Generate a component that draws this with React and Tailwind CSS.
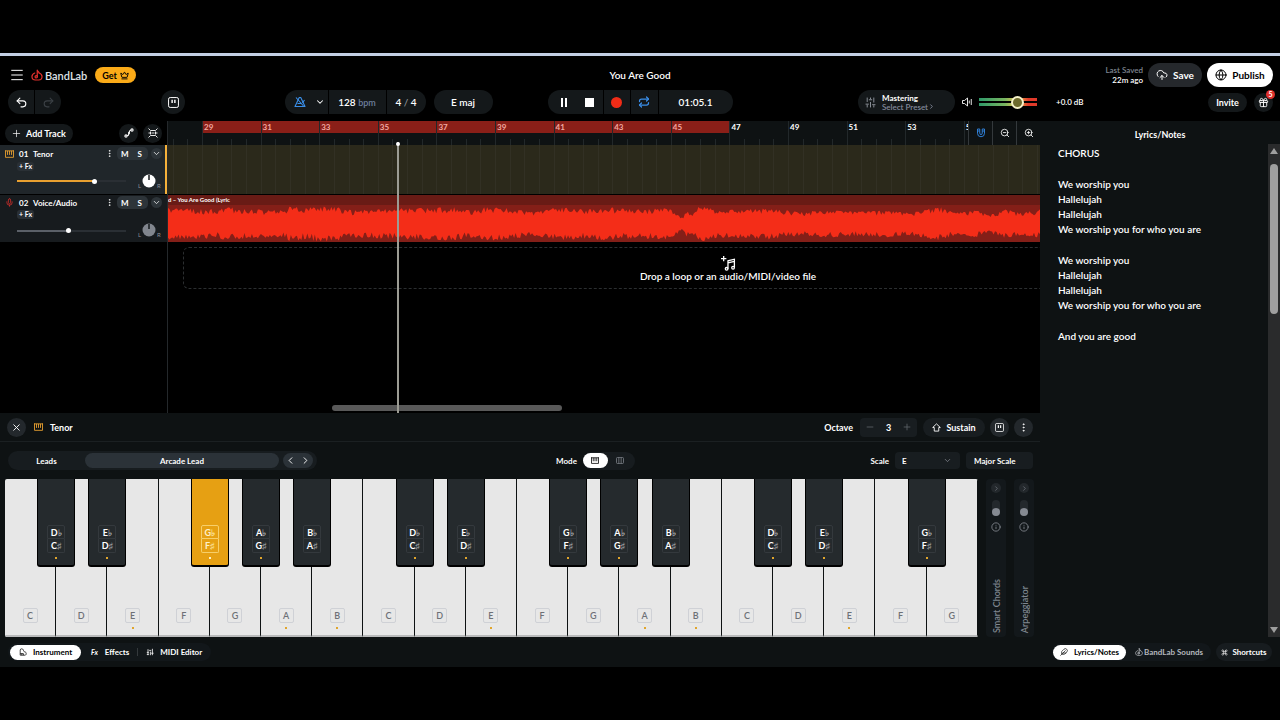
import {
  Menu,
  Undo2,
  Redo2,
  Crown,
  Plus,
  Minus,
  ChevronDown,
  ChevronLeft,
  ChevronRight,
  EllipsisVertical,
  Mic,
  X,
  Repeat,
  Gift,
  Globe,
  CloudUpload,
  ZoomIn,
  ZoomOut,
  Info,
  Feather,
  Command
} from 'lucide-react'
import clsx from 'clsx'

const FIRST_BAR = 29
const BAR_WIDTH = 29.3
const BAR_OFFSET = 34

const barX = (bar) => BAR_OFFSET + (bar - FIRST_BAR) * BAR_WIDTH

const BAR_LABELS = [29, 31, 33, 35, 37, 39, 41, 43, 45, 47, 49, 51, 53, 55]
const TICKS = Array.from({ length: 62 }, (_, i) => 28 + i / 2)

const TRACKS = [
  { id: '01', name: 'Tenor', kind: 'keys', volume: 72, active: true },
  { id: '02', name: 'Voice/Audio', kind: 'mic', volume: 47, active: false }
]

const OCTAVE = [
  { note: 'C', black: ['D', 'C'], blackDot: true },
  { note: 'D', black: ['E', 'D'], blackDot: true },
  { note: 'E', dot: true },
  { note: 'F', black: ['G', 'F'], blackDot: true },
  { note: 'G', black: ['A', 'G'], blackDot: true },
  { note: 'A', black: ['B', 'A'], dot: true },
  { note: 'B', dot: true }
]
const KEYS = Array.from({ length: 19 }, (_, i) => ({
  ...OCTAVE[i % 7],
  id: i,
  pressed: i === 3,
  last: i === 18
}))

const LYRICS = [
  ['CHORUS'],
  ['We worship you', 'Hallelujah', 'Hallelujah', 'We worship you for who you are'],
  ['We worship you', 'Hallelujah', 'Hallelujah', 'We worship you for who you are'],
  ['And you are good']
]

// [x, loudness] points that the waveform follows
const ENVELOPE = [
  [0, 14], [50, 13], [62, 15], [80, 13], [118, 12], [121, 16], [135, 14], [150, 16],
  [170, 15], [185, 12], [210, 13], [235, 14], [262, 14], [285, 15], [305, 12], [318, 15],
  [345, 14], [360, 11], [376, 12], [390, 15], [420, 13], [440, 15], [470, 13], [500, 14],
  [508, 11], [514, 5], [519, 12], [524, 8], [532, 16], [540, 15], [550, 12], [580, 13],
  [600, 14], [630, 11], [660, 12], [690, 11], [720, 12], [740, 10], [760, 13], [773, 15],
  [790, 10], [810, 12], [822, 8], [838, 13], [855, 10], [873, 13]
]

const loudnessAt = (x) => {
  const i = Math.max(1, ENVELOPE.findIndex(([px]) => px >= x))
  const [x0, y0] = ENVELOPE[i - 1]
  const [x1, y1] = ENVELOPE[i]
  return y0 + ((y1 - y0) * (x - x0)) / (x1 - x0)
}

const buildWave = () => {
  let seed = 11
  const rand = () => {
    seed = (seed * 16807) % 2147483647
    return seed / 2147483647
  }
  const top = []
  const bottom = []
  for (let x = 0; x <= 873; x += 1.5) {
    const amp = loudnessAt(x)
    const up = amp * (1.14 - 0.42 * rand() ** 1.6)
    const down = amp * (1.12 - 0.48 * rand() ** 1.6)
    top.push(`${x},${(19 - up).toFixed(1)}`)
    bottom.unshift(`${x},${(19 + down).toFixed(1)}`)
  }
  return `M${top.join('L')}L${bottom.join('L')}Z`
}
const WAVE = buildWave()

const BandLabMark = ({ className }) => (
  <svg viewBox="0 0 24 24" fill="none" stroke="currentColor" strokeWidth="2.4" strokeLinecap="round" className={className}>
    <path d="M7.500 8C3 10 1.500 13 2 16.500 2.500 20 5 22 8.500 22h7c3.500 0 6-2 6.500-5.500.5-3.500-1-6.500-5.500-8.500" />
    <path d="M12.500 2v13M12.500 2c0 3 3.500 3 3.500 6" />
    <circle cx="10.500" cy="15.500" r="2.400" />
  </svg>
)

const KeysIcon = ({ className }) => (
  <svg viewBox="0 0 20 18" fill="none" stroke="currentColor" strokeWidth="2" className={className}>
    <path d="M1 1v15.500h18V1" />
    <path d="M0 2h20M5.500 2v9M10 2v9M14.500 2v9" />
  </svg>
)

const PadIcon = ({ className }) => (
  <svg viewBox="0 0 20 20" fill="none" stroke="currentColor" strokeWidth="1.8" className={className}>
    <rect x="1" y="1" width="18" height="18" rx="3" />
    <path d="M7.500 5v6M12.500 5v6" strokeWidth="2.600" />
  </svg>
)

const GridIcon = ({ className }) => (
  <svg viewBox="0 0 20 18" fill="none" stroke="currentColor" strokeWidth="1.8" className={className}>
    <rect x="1" y="1" width="18" height="16" rx="3" />
    <path d="M7 1v16M13 1v16" />
  </svg>
)

const MetronomeIcon = ({ className }) => (
  <svg viewBox="0 0 24 24" fill="none" stroke="currentColor" strokeWidth="2.2" strokeLinejoin="round" className={className}>
    <path d="M10.500 3h3L22 21H2L10.500 3Z" />
    <path d="M4 3l15 17M7 15h7M17 14l4-6" />
  </svg>
)

const AutomationIcon = ({ className }) => (
  <svg viewBox="0 0 20 20" fill="none" stroke="currentColor" strokeWidth="2.2" className={className}>
    <circle cx="4" cy="16" r="2.200" />
    <circle cx="16" cy="4" r="2.200" />
    <path d="M6 15.500c5 0 3-3 4-5.500s0-5.500 4-5.500" />
    <path d="M8 10h4" strokeWidth="3" />
  </svg>
)

const FitIcon = ({ className }) => (
  <svg viewBox="0 0 20 20" fill="none" stroke="currentColor" strokeWidth="1.800" className={className}>
    <path d="M1 1l4 4h10l4-4M1 19l4-4h10l4 4M1 10h4M15 10h4M7 10h6M5 7v6M15 7v6" />
  </svg>
)

const MagnetIcon = ({ className }) => (
  <svg viewBox="0 0 20 20" fill="none" stroke="currentColor" strokeWidth="2" className={className}>
    <path d="M3 2h4.500v8.500a2.500 2.500 0 0 0 5 0V2H17v8.500a7 7 0 0 1-14 0V2ZM3 6h4.500M12.500 6H17" />
  </svg>
)

const MixerIcon = ({ className }) => (
  <svg viewBox="0 0 20 20" fill="none" stroke="currentColor" strokeWidth="1.8" className={className}>
    <path d="M4 1v8M4 14v5M1 13h6M10 1v3M10 9v10M7 5h6M16 1v9M16 15v4M13 14h6" />
  </svg>
)

const SpeakerIcon = ({ className }) => (
  <svg viewBox="0 0 20 20" fill="none" stroke="currentColor" strokeWidth="1.8" strokeLinejoin="round" className={className}>
    <path d="M1 7h4l6-5v16l-6-5H1V7Z" />
    <path d="M14.500 7v6M18.500 4v12" />
  </svg>
)

const UpIcon = ({ className }) => (
  <svg viewBox="0 0 20 20" fill="none" stroke="currentColor" strokeWidth="2" strokeLinejoin="round" className={className}>
    <path d="M10 2 1.500 10H5v8h10v-8h3.500L10 2Z" />
  </svg>
)

const DropIcon = ({ className }) => (
  <svg viewBox="0 0 28 28" fill="none" stroke="currentColor" strokeWidth="2.4" className={className}>
    <path d="M5 0v10M0 5h10" />
    <path d="M13 24V9l12-3v15M13 13l12-3" />
    <circle cx="10.500" cy="24" r="2.500" />
    <circle cx="22.500" cy="22" r="2.500" />
  </svg>
)

const InstrumentIcon = ({ className }) => (
  <svg viewBox="0 0 20 20" fill="none" stroke="currentColor" strokeWidth="1.8" className={className}>
    <path d="M3 18V5c0-4 7-4 8 0 .6 3 1 4 3 4.500 3 .5 4 2 4 4.500 0 2-1 4-3 4H3ZM3 14h8M7 14v4M11 14v4" />
  </svg>
)

const MidiIcon = ({ className }) => (
  <svg viewBox="0 0 20 20" fill="none" stroke="currentColor" strokeWidth="2" className={className}>
    <path d="M2 11h5M2 16h5M8 6h5M5 3v15M11 9v9M16 2v16M13 13h6" />
  </svg>
)

const IconButton = ({ label, className, children }) => (
  <button aria-label={label} className={clsx('flex shrink-0 items-center justify-center', className)}>
    {children}
  </button>
)

const Header = () => (
  <header className="flex flex-col gap-[3px] pt-[7px] pb-[7px]">
    <div className="grid h-6 grid-cols-[1fr_auto_1fr] items-center">
      <div className="flex items-center pl-[9px]">
        <IconButton label="Menu">
          <Menu size={16} strokeWidth={1.5} />
        </IconButton>
        <a href="#home" className="ml-[6px] flex items-center gap-[2px]">
          <BandLabMark className="size-3 text-[#e0302c]" />
          <span className="text-[11px] font-semibold text-[#dfe2e6]">BandLab</span>
        </a>
        <button className="ml-2 flex h-4 items-center gap-[3px] rounded-full bg-[#fbab18] px-[7px] text-[9px] font-bold text-black">
          Get <Crown size={9} strokeWidth={2.5} />
        </button>
      </div>
      <h1 className="text-[10px] font-semibold">You Are Good</h1>
      <div className="flex items-center justify-end pr-[7px]">
        <div className="mr-[5px] flex flex-col gap-[2px] text-right text-[8px] font-semibold">
          <span className="text-[#7f8691]">Last Saved</span>
          <span>22m ago</span>
        </div>
        <button className="mr-[5px] flex h-6 w-[54px] items-center justify-center gap-[5px] rounded-full bg-[#25282c] text-[10px] font-bold">
          <CloudUpload size={12} /> Save
        </button>
        <button className="flex h-6 w-[66px] items-center justify-center gap-[5px] rounded-full bg-white text-[10px] font-bold text-black">
          <Globe size={12} /> Publish
        </button>
      </div>
    </div>

    <div className="grid h-6 grid-cols-[1fr_auto_1fr] items-center text-[10px] font-semibold">
      <div className="flex items-center pr-[55px] pl-2">
        <div className="flex gap-px overflow-hidden rounded-full">
          <IconButton label="Undo" className="h-6 w-[26px] bg-[#14181a]">
            <Undo2 size={13} />
          </IconButton>
          <IconButton label="Redo" className="h-6 w-[26px] bg-[#14181a] text-[#3b4045]">
            <Redo2 size={13} />
          </IconButton>
        </div>
        <IconButton label="Virtual instrument" className="ml-[100px] size-6 rounded-full bg-[#14181a]">
          <PadIcon className="size-[11px]" />
        </IconButton>
        <div className="ml-auto flex gap-px overflow-hidden rounded-full">
          <div className="flex h-6 w-[43px] bg-[#14181a]">
            <IconButton label="Metronome" className="flex-1 pl-1 text-[#3a8ee8]">
              <MetronomeIcon className="size-[12px]" />
            </IconButton>
            <IconButton label="Metronome options" className="w-4">
              <ChevronDown size={10} strokeWidth={2.5} />
            </IconButton>
          </div>
          <button className="h-6 w-[57px] bg-[#14181a]">
            128 <span className="text-[9px] text-[#6d7f9d]">bpm</span>
          </button>
          <button className="h-6 w-[39px] bg-[#14181a]">
            4 <span className="text-[#8b9098]">/</span> 4
          </button>
        </div>
        <button className="ml-2 h-6 w-[59px] rounded-full bg-[#14181a]">E maj</button>
      </div>

      <div className="flex gap-px overflow-hidden rounded-full">
        <div className="flex h-6 w-[55px] bg-[#14181a]">
          <IconButton label="Pause" className="flex-1 gap-[2px] pl-1">
            <span className="h-[9px] w-[2px] bg-white" />
            <span className="h-[9px] w-[2px] bg-white" />
          </IconButton>
          <IconButton label="Stop" className="flex-1">
            <span className="size-[9px] bg-white" />
          </IconButton>
        </div>
        <IconButton label="Record" className="h-6 w-[26px] bg-[#14181a]">
          <span className="size-[11px] rounded-full bg-[#f02c17]" />
        </IconButton>
        <IconButton label="Loop" className="h-6 w-[27px] bg-[#14181a] text-[#3a8ee8]">
          <Repeat size={12} strokeWidth={2.5} />
        </IconButton>
        <button className="h-6 w-[74px] bg-[#14181a]">01:05.1</button>
      </div>

      <div className="flex items-center justify-end">
        <button className="flex h-6 w-[97px] items-center gap-[6px] rounded-full bg-[#14181a] pl-[7px] text-left text-[8px]">
          <MixerIcon className="size-[11px] text-[#8b9098]" />
          <span className="flex flex-col gap-px">
            <span className="font-bold">Mastering</span>
            <span className="flex items-center text-[#838a9c]">
              Select Preset <ChevronRight size={7} strokeWidth={3} />
            </span>
          </span>
        </button>
        <IconButton label="Mute" className="ml-[7px]">
          <SpeakerIcon className="size-[10px]" />
        </IconButton>
        <input
          type="range"
          aria-label="Master volume"
          defaultValue={72}
          className="mr-[3px] ml-[7px] h-2 w-[58px] appearance-none bg-[linear-gradient(transparent_3px,black_3px,black_5px,transparent_5px),linear-gradient(90deg,#2f9a6a,#79b560_45%,#e3c04a_65%,#e03a2a_85%)] [&::-webkit-slider-thumb]:size-[13px] [&::-webkit-slider-thumb]:appearance-none [&::-webkit-slider-thumb]:rounded-full [&::-webkit-slider-thumb]:border-2 [&::-webkit-slider-thumb]:border-[#f5f1c8] [&::-webkit-slider-thumb]:bg-[#6d6a2c]"
        />
        <div className="flex w-60 items-center pr-[7px] pl-4">
          <span className="mr-auto text-[8px]">+0.0 dB</span>
          <button className="h-[19px] w-[39px] rounded-full bg-[#14181a] text-[9px] font-bold">Invite</button>
          <IconButton label="What's new" className="relative ml-[7px] size-[19px] rounded-full bg-[#14181a]">
            <Gift size={11} />
            <span className="absolute -top-[3px] -right-[2px] flex size-[9px] items-center justify-center rounded-full bg-[#e0302c] text-[7px] font-bold">
              5
            </span>
          </IconButton>
        </div>
      </div>
    </div>
  </header>
)

const TrackRow = ({ track }) => (
  <div
    className={clsx(
      'flex w-full flex-col border-r-2 pl-[5px]',
      track.active ? 'h-[49px] border-[#f5b13a] bg-[#20262a] pb-[3px]' : 'mt-px h-[47px] border-transparent bg-[#171b1e]'
    )}
  >
    <div className={clsx('flex items-center', track.active ? 'h-[17px]' : 'h-[15px]')}>
      {track.kind === 'keys' ? (
        <KeysIcon className="h-2 w-[9px] text-[#e8a030]" />
      ) : (
        <Mic size={9} className="text-[#e0302c]" />
      )}
      <span className="ml-[5px] w-[14px] text-[8px] font-bold">{track.id}</span>
      <span className="text-[8px] font-bold">{track.name}</span>
      <IconButton label={`${track.name} options`} className="ml-auto">
        <EllipsisVertical size={9} />
      </IconButton>
      <div className="ml-[3px] flex h-[13px] w-[31px] items-center justify-between rounded-[5px] bg-[#2d3439] pr-[6px] pl-1 text-[8px] font-bold">
        <button aria-label="Mute">M</button>
        <button aria-label="Solo">S</button>
      </div>
      <IconButton label="Expand track" className="mr-[3px] ml-[3px] size-[11px] rounded-full bg-[#2d3439]">
        <ChevronDown size={9} />
      </IconButton>
    </div>
    <button className="ml-3 h-[9px] w-[17px] rounded-[3px] bg-[#2a3035] text-[7px] font-bold">+ Fx</button>
    <div className="flex flex-1 items-center">
      <input
        type="range"
        aria-label={`${track.name} volume`}
        defaultValue={track.volume}
        className="ml-3 h-[2px] w-[109px] appearance-none [&::-webkit-slider-thumb]:size-[5px] [&::-webkit-slider-thumb]:appearance-none [&::-webkit-slider-thumb]:rounded-full [&::-webkit-slider-thumb]:bg-white"
        style={{
          background: `linear-gradient(90deg, ${track.active ? '#e8a030' : '#5b6068'} ${track.volume}%, #2a2f34 ${track.volume}%)`
        }}
      />
      <div className="ml-3 flex items-end text-[6px] text-[#8b9098]">
        <span>L</span>
        <svg viewBox="0 0 14 14" role="img" aria-label="Pan" className="mx-px mb-px size-[14px]">
          <circle cx="7" cy="7" r="6.500" fill={track.active ? '#ffffff' : '#81868e'} />
          <path d="M7 1v5" stroke="#15181b" strokeWidth="1.500" />
        </svg>
        <span>R</span>
      </div>
    </div>
  </div>
)

const TrackPanel = () => (
  <aside className="flex w-[168px] shrink-0 flex-col border-r border-[#24282b] bg-black">
    <div className="flex h-6 items-center pl-[5px]">
      <button className="flex h-[19px] w-[68px] items-center gap-1 rounded-full bg-[#14181a] pl-[6px] text-[9px] font-bold">
        <Plus size={11} strokeWidth={1.5} /> Add Track
      </button>
      <IconButton label="Automation" className="ml-auto size-[19px] rounded-full bg-[#14181a]">
        <AutomationIcon className="size-[10px]" />
      </IconButton>
      <IconButton label="Fit tracks" className="mr-[5px] ml-[5px] size-[19px] rounded-full bg-[#14181a]">
        <FitIcon className="size-[10px]" />
      </IconButton>
    </div>
    {TRACKS.map((track) => (
      <TrackRow key={track.id} track={track} />
    ))}
  </aside>
)

const Ruler = () => (
  <div className="relative h-6 overflow-hidden bg-[#0e1213] text-[8px] font-bold">
    <div
      className="absolute top-0 h-3 bg-[#8a1f18]"
      style={{ left: barX(29), width: barX(47) - barX(29) }}
    />
    {TICKS.map((tick) => (
      <span
        key={tick}
        className={clsx('absolute bottom-0 w-px bg-[#22282a]', tick % 2 === 1 ? 'h-6' : 'h-[6px]')}
        style={{ left: barX(tick) }}
      />
    ))}
    {BAR_LABELS.map((bar) => (
      <span
        key={bar}
        className={clsx('absolute top-[2px]', bar < 47 ? 'text-[#f2a9a0]' : 'text-white')}
        style={{ left: barX(bar) + 2 }}
      >
        {bar}
      </span>
    ))}
    <div className="absolute top-0 right-0 flex h-6">
      <IconButton label="Snap to grid" className="w-6 border-l border-[#34393c] bg-[#0e1213] text-[#2f7fd6]">
        <MagnetIcon className="size-[10px]" />
      </IconButton>
      <IconButton label="Zoom out" className="w-6 border-l border-[#34393c] bg-[#0e1213]">
        <ZoomOut size={10} />
      </IconButton>
      <IconButton label="Zoom in" className="w-6 border-l border-[#34393c] bg-[#0e1213]">
        <ZoomIn size={10} />
      </IconButton>
    </div>
  </div>
)

const Timeline = () => (
  <section className="relative flex min-w-0 flex-1 flex-col overflow-hidden bg-black">
    <Ruler />
    <div className="relative h-[49px] overflow-hidden bg-[#2b291b]">
      {TICKS.map((tick) => (
        <span key={tick} className="absolute top-0 h-full w-px bg-[#323024]" style={{ left: barX(tick) }} />
      ))}
    </div>
    <div className="mt-px flex h-[47px] flex-col bg-[#841f18]">
      <div className="h-[10px] bg-[#691b15] text-[6px] leading-[10px] font-bold">d – You Are Good (Lyric</div>
      <svg viewBox="0 0 873 37" preserveAspectRatio="none" className="min-h-0 w-full flex-1">
        <path d={WAVE} fill="#f42d18" />
      </svg>
    </div>
    <div className="mt-[5px] ml-[15px] flex h-[42px] w-[1090px] shrink-0 flex-col items-center justify-center rounded-md border border-dashed border-[#2b2e30] text-[10px] font-semibold">
      <DropIcon className="size-[15px]" />
      Drop a loop or an audio/MIDI/video file
    </div>
    <div className="mt-auto mb-[2px] ml-[164px] h-[6px] w-[230px] rounded-full bg-[#595959]" />
    <div className="absolute top-[21px] bottom-0 left-[229px] w-[2px] bg-[#9c9c94]">
      <span className="absolute top-0 -left-px size-1 rounded-full bg-white" />
    </div>
  </section>
)

const KeyCap = ({ letter, accidental, pressed, className }) => (
  <span
    className={clsx(
      'flex h-[14px] w-[18px] items-center justify-center border text-[9px] font-bold',
      pressed ? 'border-[#f7cf6a] text-[#fdf0c8]' : 'border-[#34393d] text-white',
      className
    )}
  >
    {letter}
    <span className={clsx('text-[9px]', pressed ? 'text-[#fbe09a]' : 'text-[#9a9ea2]')}>{accidental}</span>
  </span>
)

const PianoKey = ({ item }) => (
  <div className="relative h-[158px] min-w-0 flex-1">
    <button
      aria-label={item.note}
      className="flex h-full w-full flex-col items-center justify-end border-r border-b-2 border-r-[#0e1213] border-b-[#b9babb] bg-[#e7e7e7]"
    >
      <span className="flex size-[15px] items-center justify-center rounded-[2px] border border-[#cfd1d6] text-[9px] font-semibold text-[#6d7076]">
        {item.note}
      </span>
      <span className={clsx('mt-1 mb-[6px] size-[2px]', item.dot && 'bg-[#e0a52c]')} />
    </button>
    {item.black && !item.last && (
      <button
        aria-label={`${item.black[1]} sharp`}
        className={clsx(
          'absolute top-0 -right-[19px] z-10 flex h-[88px] w-[38px] flex-col items-center justify-end rounded-b-[3px] border border-t-0 border-b-2 border-black',
          item.pressed ? 'bg-[#e6a013]' : 'bg-[#252a2d]'
        )}
      >
        <KeyCap letter={item.black[0]} accidental="♭" pressed={item.pressed} className="rounded-t-[2px]" />
        <KeyCap letter={item.black[1]} accidental="♯" pressed={item.pressed} className="rounded-b-[2px] border-t-0" />
        <span
          className={clsx(
            'mt-1 mb-[6px] size-[2px]',
            item.blackDot && (item.pressed ? 'bg-[#fdf0c8]' : 'bg-[#e0a52c]')
          )}
        />
      </button>
    )}
  </div>
)

const SideStrip = ({ title }) => (
  <div className="flex w-5 flex-col items-center rounded bg-[#13181b] py-1">
    <IconButton label={`Open ${title}`} className="size-[10px] rounded-full bg-[#23282c] text-[#858a92]">
      <ChevronRight size={7} />
    </IconButton>
    <input
      type="checkbox"
      aria-label={title}
      className="mt-[7px] flex h-4 w-2 appearance-none items-end justify-center rounded-full bg-[#23282c] before:size-2 before:shrink-0 before:rounded-full before:bg-[#858a92]"
    />
    <Info size={10} className="mt-[6px] text-[#858a92]" />
    <span className="mt-auto rotate-180 text-[9px] font-semibold text-[#7f868f] [writing-mode:vertical-rl]">
      {title}
    </span>
  </div>
)

const InstrumentPanel = () => (
  <section className="flex flex-col bg-[#0e1213] text-[8px] font-bold">
    <div className="flex h-[29px] items-center border-b border-[#1b2022] pr-[7px] pl-[7px] text-[9px]">
      <IconButton label="Close panel" className="size-[19px] rounded-full bg-[#23282c]">
        <X size={11} />
      </IconButton>
      <KeysIcon className="ml-2 h-2 w-[9px] text-[#e8a030]" />
      <span className="mr-auto ml-[7px]">Tenor</span>
      <span>Octave</span>
      <div className="ml-[7px] flex h-[19px] w-[57px] items-center justify-between rounded bg-[#181d20] px-[5px]">
        <button aria-label="Octave down" className="text-[#5d6369]">
          <Minus size={10} />
        </button>
        <output>3</output>
        <button aria-label="Octave up" className="text-[#5d6369]">
          <Plus size={10} />
        </button>
      </div>
      <button className="ml-[6px] flex h-[19px] w-[62px] items-center justify-center gap-[5px] rounded-full bg-[#181d20]">
        <UpIcon className="size-[9px]" /> Sustain
      </button>
      <IconButton label="Keyboard layout" className="ml-[5px] size-[19px] rounded-full bg-[#23282c]">
        <PadIcon className="size-[9px]" />
      </IconButton>
      <IconButton label="More" className="ml-[5px] size-[19px] rounded-full bg-[#23282c]">
        <EllipsisVertical size={11} />
      </IconButton>
    </div>

    <div className="grid h-[37px] grid-cols-[1fr_auto_1fr] items-center pr-[7px] pl-2">
      <div className="flex h-[19px] w-[309px] items-center rounded-full bg-[#171c1f]">
        <button className="w-[77px]">Leads</button>
        <button className="h-[15px] flex-1 rounded-full bg-[#2b3238]">Arcade Lead</button>
        <div className="mx-1 flex h-[15px] w-[30px] items-center justify-between rounded-full bg-[#2b3238] px-[2px]">
          <button aria-label="Previous preset">
            <ChevronLeft size={11} />
          </button>
          <button aria-label="Next preset">
            <ChevronRight size={11} />
          </button>
        </div>
      </div>
      <div className="flex items-center gap-[6px] pl-[150px]">
        <span>Mode</span>
        <div className="flex h-[18px] w-[52px] items-center rounded-full bg-[#171c1f]">
          <IconButton label="Piano mode" className="h-[15px] w-[25px] rounded-full bg-white text-black">
            <KeysIcon className="h-[7px] w-2" />
          </IconButton>
          <IconButton label="Pad mode" className="h-[15px] w-[25px] text-[#8b9098]">
            <GridIcon className="h-[7px] w-2" />
          </IconButton>
        </div>
      </div>
      <div className="flex items-center justify-end gap-[6px]">
        <label htmlFor="scale">Scale</label>
        <div className="relative h-[17px] w-[65px]">
          <select id="scale" className="h-full w-full appearance-none rounded bg-[#181d20] pl-[7px]">
            <option>E</option>
          </select>
          <ChevronDown size={9} className="absolute top-1 right-2 text-[#858a92]" />
        </div>
        <select aria-label="Scale type" className="h-[17px] w-[67px] appearance-none rounded bg-[#181d20] pl-2">
          <option>Major Scale</option>
        </select>
      </div>
    </div>

    <div className="flex gap-2 pr-[6px] pl-[5px]">
      <div className="flex min-w-0 flex-1 overflow-hidden rounded-[2px]">
        {KEYS.map((item) => (
          <PianoKey key={item.id} item={item} />
        ))}
      </div>
      <div className="flex gap-2">
        <SideStrip title="Smart Chords" />
        <SideStrip title="Arpeggiator" />
      </div>
    </div>

    <nav className="flex h-[30px] items-center pl-2">
      <div className="flex h-[18px] w-[203px] items-center rounded-full bg-[#12171a]">
        <button className="ml-[2px] flex h-[15px] w-[71px] items-center justify-center gap-[6px] rounded-full bg-white text-black">
          <InstrumentIcon className="size-2" /> Instrument
        </button>
        <button className="ml-[10px] flex items-center gap-[7px]">
          <span className="text-[7px] italic">Fx</span> Effects
        </button>
        <span className="mx-2 h-2 w-px bg-[#34393c]" />
        <button className="flex items-center gap-[6px]">
          <MidiIcon className="size-2" /> MIDI Editor
        </button>
      </div>
    </nav>
  </section>
)

const LyricsPanel = () => (
  <aside className="flex w-60 shrink-0 flex-col bg-[#0e1213]">
    <h2 className="flex h-[23px] items-center justify-center pt-[3px] text-[9px] font-bold">Lyrics/Notes</h2>
    <div className="flex flex-1">
      <div className="flex flex-1 flex-col gap-4 pt-[2px] pl-[18px] text-[10px] leading-[15px] font-semibold">
        {LYRICS.map((stanza, i) => (
          <p key={i}>
            {stanza.map((line, j) => (
              <span key={j} className="block">
                {line}
              </span>
            ))}
          </p>
        ))}
      </div>
      <div className="flex w-3 flex-col items-center bg-[#2a2b2c] py-1">
        <svg viewBox="0 0 8 6" className="h-[6px] w-2">
          <path d="M4 0l4 6H0Z" fill="#9f9f9f" />
        </svg>
        <span className="mt-[10px] h-[150px] w-2 rounded-full bg-[#9f9f9f]" />
        <svg viewBox="0 0 8 6" className="mt-auto h-[6px] w-2">
          <path d="M4 6l4-6H0Z" fill="#9f9f9f" />
        </svg>
      </div>
    </div>
    <nav className="flex h-[30px] items-center justify-between pr-2 pl-3 text-[8px] font-bold">
      <div className="flex h-[18px] w-[159px] items-center rounded-full bg-[#12171a]">
        <button className="ml-px flex h-[15px] w-[73px] items-center justify-center gap-[6px] rounded-full bg-white text-black">
          <Feather size={8} /> Lyrics/Notes
        </button>
        <button className="ml-[9px] flex items-center gap-px text-[#b4b8bd]">
          <BandLabMark className="size-2" /> BandLab Sounds
        </button>
      </div>
      <button className="flex h-[18px] w-[56px] items-center justify-center gap-1 rounded-full bg-[#171c1f]">
        <Command size={7} /> Shortcuts
      </button>
    </nav>
  </aside>
)

const App = () => (
  <div className="flex min-h-screen flex-col bg-black py-[53px] font-['Lato',sans-serif] leading-none text-white">
    <div className="h-[3px] bg-[#c3cfe4]" />
    <Header />
    <main className="flex flex-1">
      <div className="flex min-w-0 flex-1 flex-col">
        <div className="flex min-h-[292px] flex-1">
          <TrackPanel />
          <Timeline />
        </div>
        <InstrumentPanel />
      </div>
      <LyricsPanel />
    </main>
  </div>
)

export default App
